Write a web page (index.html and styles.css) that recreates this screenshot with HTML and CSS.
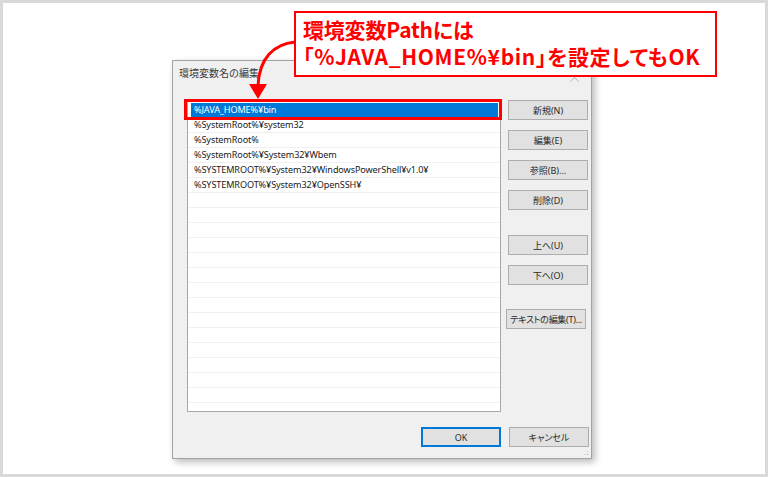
FILE: index.html
```html
<!DOCTYPE html>
<html lang="ja">
<head>
<meta charset="utf-8">
<title>環境変数名の編集</title>
<link rel="stylesheet" href="styles.css">
</head>
<body>
<div class="frame">
  <div class="dialog">
    <div class="titlebar">
      <span class="title">環境変数名の編集</span>
      <svg class="close" width="9" height="9" viewBox="0 0 9 9"><path d="M0.5,0.5 L8.5,8.5 M8.5,0.5 L0.5,8.5" stroke="#b0b0b0" stroke-width="1"/></svg>
    </div>
    <div class="main">
      <div class="list">
        <div class="row sel">%JAVA_HOME%¥bin</div>
        <div class="row">%SystemRoot%¥system32</div>
        <div class="row">%SystemRoot%</div>
        <div class="row">%SystemRoot%¥System32¥Wbem</div>
        <div class="row">%SYSTEMROOT%¥System32¥WindowsPowerShell¥v1.0¥</div>
        <div class="row">%SYSTEMROOT%¥System32¥OpenSSH¥</div>
        <div class="row"></div><div class="row"></div><div class="row"></div>
        <div class="row"></div><div class="row"></div><div class="row"></div>
        <div class="row"></div><div class="row"></div><div class="row"></div>
        <div class="row"></div><div class="row"></div><div class="row"></div>
        <div class="row"></div><div class="row"></div><div class="row"></div>
      </div>
      <div class="btns">
        <button class="btn">新規(N)</button>
        <button class="btn">編集(E)</button>
        <button class="btn">参照(B)...</button>
        <button class="btn">削除(D)</button>
        <button class="btn gap-up">上へ(U)</button>
        <button class="btn">下へ(O)</button>
        <button class="btn gap-text">テキストの編集(T)...</button>
      </div>
    </div>
    <div class="footer">
      <button class="btn ok">OK</button>
      <button class="btn">キャンセル</button>
    </div>
    <span class="grip"></span>
  </div>

  <div class="hl"></div>
  <svg class="arrow" width="768" height="477" viewBox="0 0 768 477">
    <path d="M295,42 C274,44 259,58 258,86" fill="none" stroke="#ff0000" stroke-width="3"/>
    <polygon points="249,84 267,84 258,99" fill="#ff0000"/>
  </svg>
  <div class="callout">
    <div class="cl">環境変数Pathには</div>
    <div class="cl wide">「%JAVA_HOME%¥bin」を設定してもOK</div>
  </div>
</div>
</body>
</html>
```
FILE: styles.css
```css
* { box-sizing: border-box; }
html, body { margin: 0; padding: 0; background: #fff; }
body { font-family: "Noto Sans", "Noto Sans CJK JP", sans-serif; }

.frame {
  position: relative;
  width: 768px;
  height: 477px;
  border: 3px solid #d9d9d9;
  background: #fff;
  padding: 57px 0 0 169px;
}

.dialog {
  position: relative;
  width: 420px;
  height: 399px;
  background: #f0f0f0;
  border: 1px solid #a3a3a3;
  box-shadow: 3px 3px 7px rgba(0,0,0,0.28);
}

.titlebar {
  display: flex;
  align-items: flex-start;
  height: 39px;
  padding: 4px 8px 0 6px;
}
.title {
  font-family: "Noto Sans CJK JP", sans-serif;
  font-size: 10px;
  line-height: 16px;
  color: #3a3a3a;
}
.close {
  margin-left: auto;
  margin-top: 8px;
  margin-right: 4px;
}

.main {
  display: flex;
  gap: 7px;
  padding-left: 14px;
}

.list {
  width: 314px;
  height: 312px;
  background: #fff;
  border: 1px solid #a8a8a8;
  padding-top: 2px;
  overflow: hidden;
}
.row {
  height: 15px;
  border-bottom: 1px solid #f0f0f0;
  padding-left: 6px;
  font-size: 9.1px;
  line-height: 14px;
  color: #1a1a1a;
  white-space: nowrap;
  letter-spacing: -0.1px;
}
.row.sel {
  background: #0078d7;
  color: #fff;
  margin: 0 2px 0 3px;
  padding-left: 3px;
  border-bottom-color: #0078d7;
}

.btns {
  display: flex;
  flex-direction: column;
  gap: 10px;
  width: 80px;
}
.btn {
  width: 80px;
  height: 20px;
  padding: 0;
  margin: 0;
  background: #e1e1e1;
  border: 1px solid #adadad;
  font-family: "Noto Sans", "Noto Sans CJK JP", sans-serif;
  font-size: 9px;
  line-height: 17px;
  color: #2a2a2a;
  text-align: center;
  white-space: nowrap;
  font-feature-settings: "palt";
}
.gap-up { margin-top: 15px; }
.gap-text { margin-top: 14px; margin-left: -2px; letter-spacing: -0.3px; }

.footer {
  display: flex;
  justify-content: flex-end;
  gap: 8px;
  padding-right: 2px;
  margin-top: 15px;
}
.btn.ok {
  border: 2px solid #0078d7;
  line-height: 15px;
}

.grip {
  position: absolute;
  right: 2px;
  bottom: 2px;
  width: 6px;
  height: 6px;
  background:
    radial-gradient(circle, #a0a0a0 0.7px, transparent 1px) 0 0 / 3px 3px;
  clip-path: polygon(100% 0, 100% 100%, 0 100%);
}

.hl {
  position: absolute;
  left: 181px;
  top: 96px;
  width: 318px;
  height: 21px;
  border: 3px solid #ff0000;
}

.arrow {
  position: absolute;
  left: -3px;
  top: -3px;
}

.callout {
  position: absolute;
  left: 291px;
  top: 8px;
  width: 423px;
  height: 66px;
  border: 2px solid #ff0000;
  background: #fff;
  padding: 3px 0 0 7px;
  font-family: "Noto Sans CJK JP", sans-serif;
  font-weight: bold;
  font-size: 21px;
  color: #ff0000;
  white-space: nowrap;
  font-feature-settings: "palt";
  letter-spacing: -0.2px;
}
.cl {
  height: 27px;
  line-height: 27px;
}
.cl.wide {
  letter-spacing: 0.65px;
}
```
